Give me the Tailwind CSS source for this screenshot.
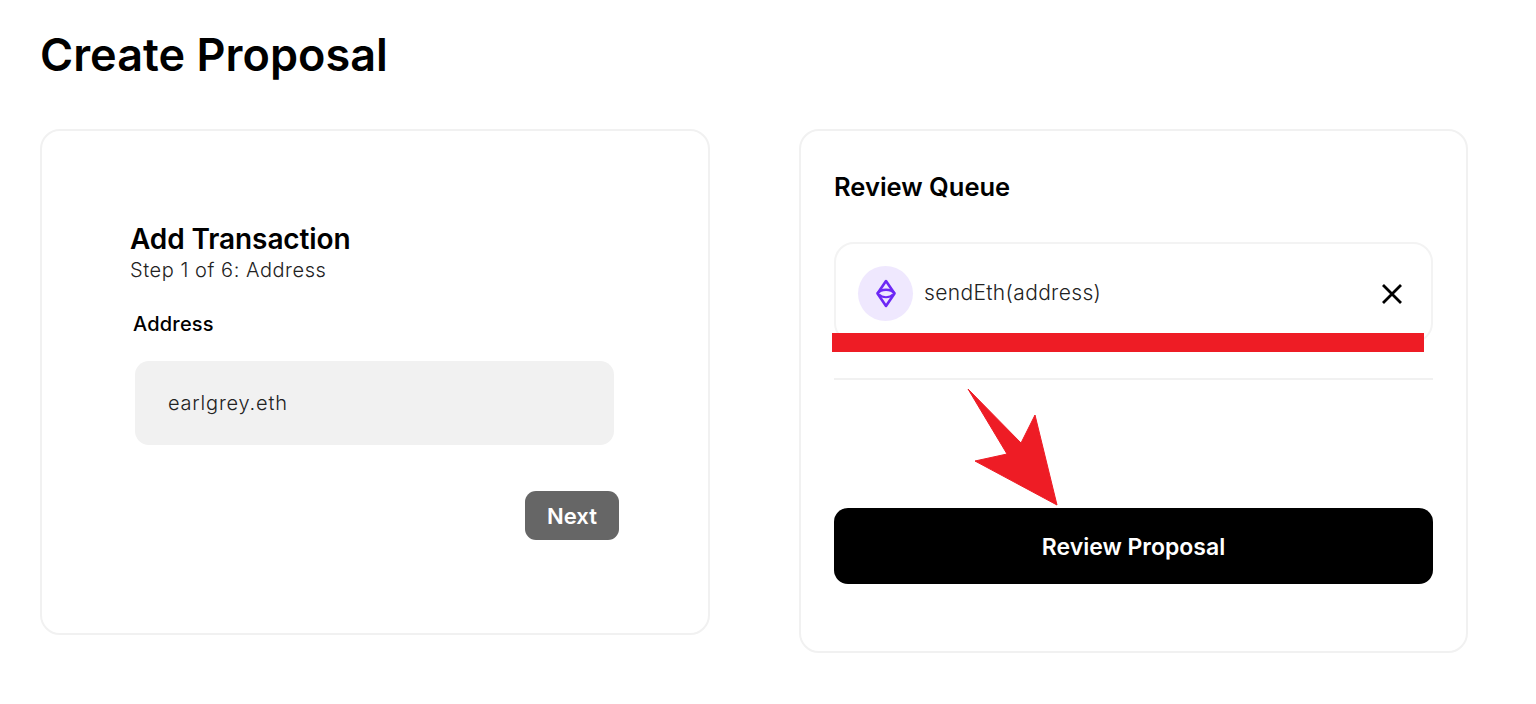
<!DOCTYPE html>
<html><head><meta charset="utf-8"><script src="https://cdn.jsdelivr.net/npm/@tailwindcss/browser@4"></script></head>
<body class="bg-white">
<div class="relative w-[1536px] h-[704px] overflow-hidden px-10 font-['Inter',sans-serif] text-black">
  <h1 class="h-[129px] pt-[27px] text-[45px] leading-[56px] font-semibold tracking-[0.03px]">Create Proposal</h1>
  <div class="flex items-start gap-[89px]">
    <section class="w-[670px] h-[506px] border-2 border-[#f1f1f1] rounded-[20px] pl-[88px] pr-[89px] pt-[91px]">
      <h2 class="text-[28px] leading-[34px] font-semibold -tracking-[0.1px]">Add Transaction</h2>
      <p class="mt-[1px] text-[20px] leading-[26px] font-light tracking-[0.55px] text-[#222]">Step 1 of 6: Address</p>
      <label class="block mt-[28px] ml-[3px] text-[20px] leading-[26px] font-medium tracking-[0.2px]">Address</label>
      <div class="mt-[24px] ml-[5px] w-[479px] h-[84px] rounded-[14px] bg-[#f1f1f1] flex items-center pl-[33px] text-[20px] font-light tracking-[0.8px] text-[#222]">earlgrey.eth</div>
      <div class="flex justify-end mt-[46px]">
        <button class="w-[94px] h-[49px] pt-[2px] rounded-[11px] bg-[#666666] text-white text-[22px] font-semibold">Next</button>
      </div>
    </section>
    <section class="relative w-[669px] h-[524px] border-2 border-[#f1f1f1] rounded-[20px] px-[33px] pt-[40px]">
      <h2 class="text-[25.5px] leading-[32px] font-semibold">Review Queue</h2>
      <div class="mt-[39px] h-[101px] border-2 border-[#f3f3f3] rounded-[20px] pl-[22px] pr-[28px] pt-[22px] flex items-start">
        <div class="w-[55px] h-[55px] rounded-full bg-[#efe8fe] flex items-center justify-center">
          <svg width="20" height="29" viewBox="0 0 20 29" fill="none" stroke="#6d28f5" stroke-width="2.6" stroke-linejoin="round"><path d="M10 2 18.5 14.5 10 27 1.5 14.5Z"/><path d="M1.5 14.5C5 9.5 15 9.5 18.5 14.5"/><path d="M3 15.5C6 19 14 19 17 15.5" stroke-width="2"/></svg>
        </div>
        <span class="ml-[11px] mt-[13px] text-[21px] leading-[28px] font-light tracking-[0.35px] text-[#222]">sendEth(address)</span>
        <svg class="ml-auto mt-[17px]" width="22" height="22" viewBox="0 0 22 22" fill="none" stroke="#000" stroke-width="2.8"><path d="M2 2 20 20M20 2 2 20"/></svg>
      </div>
      <hr class="mt-[35px] border-0 h-[2px] bg-[#f1f1f1]">
      <button class="mt-[128px] w-full h-[76px] pt-[2px] rounded-[14px] bg-black text-white text-[23px] font-semibold">Review Proposal</button>
    </section>
  </div>
  <div class="absolute left-[832px] top-[333px] w-[592px] h-[19px] bg-[#ee1c25]"></div>
  <svg class="absolute left-0 top-0 pointer-events-none" width="1536" height="704" viewBox="0 0 1536 704"><path fill="#ee1c25" stroke="#ee1c25" stroke-width="1" stroke-linejoin="round" d="M968 389 1021 443 1035 415 1057 505 975 461 1007 454Z"/></svg>
</div>
</body></html>
